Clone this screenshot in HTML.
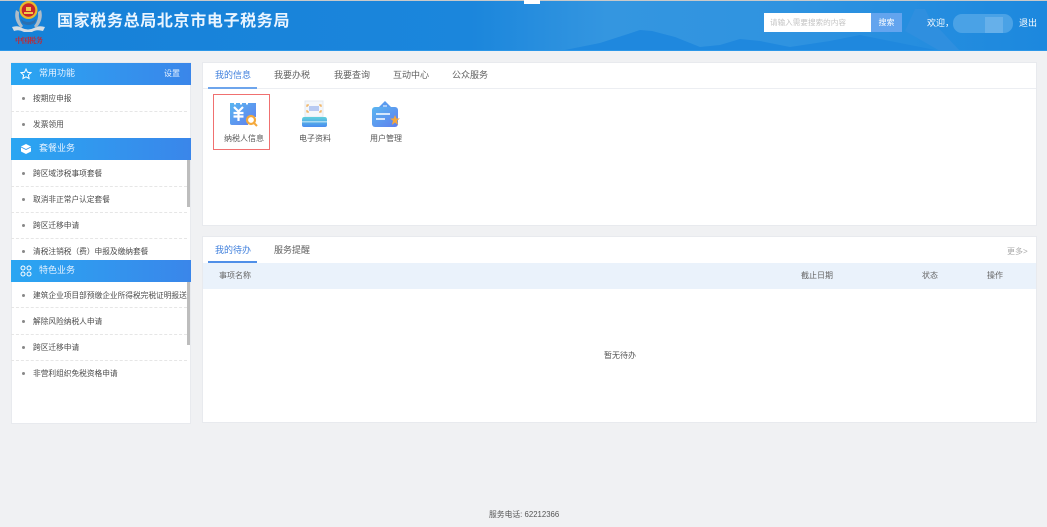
<!DOCTYPE html>
<html lang="zh"><head><meta charset="utf-8"><style>
html,body{margin:0;padding:0}
body{width:1047px;height:527px;background:#f0f1f3;position:relative;overflow:hidden;font-family:"Liberation Sans","Noto Sans CJK SC",sans-serif;color:#555}
#w{position:absolute;left:0;top:0;width:1047px;height:527px;filter:blur(.3px)}
.a{position:absolute;white-space:nowrap}
.t{font-size:8px;line-height:12px}
.panel{background:#fff;border:1px solid #e8eaee;box-sizing:border-box}
.hd{position:absolute;left:11px;width:180px;height:22px;background:linear-gradient(90deg,#2aa6f2,#3a86ea);color:#e8f3ff;font-size:9px;line-height:21px}
.hd span{position:absolute;left:28px}
.hd svg{position:absolute;left:9px;top:5px}
.li{position:absolute;left:11px;width:176px;font-size:7.7px;line-height:12px;color:#4a4a4a;white-space:nowrap;overflow:hidden}
.li i{position:absolute;left:11px;top:4px;width:3px;height:3px;border-radius:50%;background:#888}
.li b{font-weight:normal;position:absolute;left:22px;top:0}
.dash{position:absolute;left:11px;width:176px;border-top:1px dashed #e6e6e6}
.tab{position:absolute;font-size:9px;line-height:12px;color:#5f5f5f;white-space:nowrap}
</style></head><body><div id="w">
<div class="a" style="left:0;top:0;width:1047px;height:1px;background:#c9c9c9"></div>
<div class="a" style="left:0;top:1px;width:1047px;height:50px;background:linear-gradient(90deg,#1681d8 0%,#1b86dc 45%,#3496e0 58%,#2f93e0 75%,#1c88de 100%);overflow:hidden">
<svg width="1047" height="50" style="position:absolute;left:0;top:0"><path d="M560 50L600 42L628 33L640 29L652 30L675 36L700 46L720 44L740 38L760 40L790 46L830 40L860 34L900 42L940 50Z" fill="#1f88de"/><path d="M905 30L915 8L925 8L930 18L960 50L940 50Z" fill="#2f8fdf"/></svg>
</div>
<div class="a" style="left:0;top:50px;width:1047px;height:1px;background:#2b97e8"></div>
<div class="a" style="left:524px;top:0;width:16px;height:4px;background:#fff"></div>
<svg class="a" style="left:10px;top:0" width="38" height="46" viewBox="0 0 38 46">
<path d="M2 27Q8 25 12 28Q18 31 24 28Q29 25 35 27L33 31Q26 29 22 32H14Q9 29 4 31Z" fill="#d5dde3"/>
<path d="M6 10Q3 20 11 28L13 26Q8 20 9 12Z" fill="#aebcc8"/><path d="M31 10Q34 20 26 28L24 26Q29 20 28 12Z" fill="#aebcc8"/>
<circle cx="18.5" cy="10" r="9" fill="#e8b92e"/><circle cx="18.5" cy="10" r="6.8" fill="#c9242a"/><path d="M14 14H23V12H14ZM16 11H21V7H16Z" fill="#f0c84a"/>
<path d="M11 19Q18 25 26 19L25 23Q18 27 12 23Z" fill="#2a6fb0"/>
<text x="5" y="43" font-size="7.5" fill="#c9242a" font-family="Liberation Serif,Noto Serif CJK SC,serif" font-weight="bold" textLength="28">中国税务</text></svg>
<div class="a" style="left:57px;top:12px;font-size:16px;line-height:20px;color:#eaf5ff;font-weight:bold;letter-spacing:.65px">国家税务总局北京市电子税务局</div>
<div class="a" style="left:764px;top:13px;width:107px;height:19px;background:#fff"></div>
<div class="a t" style="left:770px;top:17px;color:#c4c4c4;font-size:7.6px">请输入需要搜索的内容</div>
<div class="a" style="left:871px;top:13px;width:31px;height:19px;background:#63a4ee;color:#fff;font-size:8px;line-height:19px;text-align:center">搜索</div>
<div class="a" style="left:927px;top:17px;font-size:9px;line-height:12px;color:#fff">欢迎，</div>
<div class="a" style="left:953px;top:14px;width:60px;height:19px;background:#4aa2e6;border-radius:9px"></div>
<div class="a" style="left:985px;top:17px;width:18px;height:16px;background:#66b0ea"></div>
<div class="a" style="left:1019px;top:17px;font-size:9px;line-height:12px;color:#fff">退出</div>

<div class="a panel" style="left:11px;top:62px;width:180px;height:362px;border-color:#e8eaee"></div>
<div class="hd" style="top:63px"><svg width="12" height="12" viewBox="0 0 12 12"><path d="M6 1L7.5 4.3L11 4.7L8.4 7L9.1 10.5L6 8.8L2.9 10.5L3.6 7L1 4.7L4.5 4.3Z" fill="none" stroke="#fff"/></svg><span>常用功能</span><span style="left:153px;font-size:8px">设置</span></div>
<div class="li" style="top:93px;height:12px"><i></i><b>按期应申报</b></div>
<div class="dash" style="top:111px"></div>
<div class="li" style="top:119px;height:12px"><i></i><b>发票领用</b></div>
<div class="hd" style="top:138px"><svg width="12" height="12" viewBox="0 0 12 12"><path d="M6 1L11 3.5V8.5L6 11L1 8.5V3.5Z" fill="#fff"/><path d="M1 4L6 6.5L11 4" fill="none" stroke="#2f97ee" stroke-width=".8"/></svg><span>套餐业务</span></div>
<div class="li" style="top:168px;height:12px"><i></i><b>跨区域涉税事项套餐</b></div>
<div class="dash" style="top:186px"></div>
<div class="li" style="top:194px;height:12px"><i></i><b>取消非正常户认定套餐</b></div>
<div class="dash" style="top:212px"></div>
<div class="li" style="top:220px;height:12px"><i></i><b>跨区迁移申请</b></div>
<div class="dash" style="top:238px"></div>
<div class="li" style="top:246px;height:12px"><i></i><b>清税注销税（费）申报及缴纳套餐</b></div>
<div class="a" style="left:187px;top:160px;width:3px;height:47px;background:#bdbdbd"></div>
<div class="hd" style="top:260px;height:22px"><svg width="12" height="12" viewBox="0 0 12 12" fill="none" stroke="#fff"><circle cx="3" cy="3" r="2"/><circle cx="9" cy="3" r="2"/><circle cx="3" cy="9" r="2"/><circle cx="9" cy="9" r="2"/></svg><span>特色业务</span></div>
<div class="li" style="top:290px;height:12px"><i></i><b>建筑企业项目部预缴企业所得税完税证明报送</b></div>
<div class="dash" style="top:307px"></div>
<div class="li" style="top:316px;height:12px"><i></i><b>解除风险纳税人申请</b></div>
<div class="dash" style="top:334px"></div>
<div class="li" style="top:342px;height:12px"><i></i><b>跨区迁移申请</b></div>
<div class="dash" style="top:360px"></div>
<div class="li" style="top:368px;height:12px"><i></i><b>非营利组织免税资格申请</b></div>
<div class="a" style="left:187px;top:282px;width:3px;height:63px;background:#bdbdbd"></div>

<div class="a panel" style="left:202px;top:62px;width:835px;height:164px"></div>
<div class="a" style="left:203px;top:88px;width:833px;height:1px;background:#eceef2"></div>
<div class="a" style="left:208px;top:87px;width:49px;height:2px;background:#6ea5ec"></div>
<div class="tab" style="left:215px;top:69px;color:#3f7fdc">我的信息</div>
<div class="tab" style="left:274px;top:69px">我要办税</div>
<div class="tab" style="left:334px;top:69px">我要查询</div>
<div class="tab" style="left:393px;top:69px">互动中心</div>
<div class="tab" style="left:452px;top:69px">公众服务</div>
<div class="a" style="left:213px;top:94px;width:57px;height:56px;border:1px solid #f07070;box-sizing:border-box"></div>
<svg class="a" style="left:228px;top:101px" width="30" height="26" viewBox="0 0 30 26">
<defs><linearGradient id="g1" x1="0" y1="0" x2="1" y2="1"><stop offset="0" stop-color="#5ab6f0"/><stop offset="1" stop-color="#5f7eee"/></linearGradient><linearGradient id="g2" x1="0" y1="0" x2="0" y2="1"><stop offset="0" stop-color="#5fd0dc"/><stop offset="1" stop-color="#4a8cf0"/></linearGradient></defs>
<path d="M2 2H6V3.5H8V2H12V3.5H14V2H18V3.5H20V2H28V16H20V24H4Q2 24 2 22Z" fill="url(#g1)"/>
<path d="M6 6L10.5 10.5L15 6M5.5 12H15.5M5.5 15.5H15.5M10.5 10.5V20" stroke="#fff" stroke-width="2.2" fill="none"/>
<circle cx="23" cy="19" r="4" fill="#fff" stroke="#f4a93c" stroke-width="2.2"/><path d="M26 22L29 25" stroke="#f4a93c" stroke-width="2"/></svg>
<div class="a t" style="left:224px;top:133px;color:#555">纳税人信息</div>
<svg class="a" style="left:300px;top:100px" width="29" height="30" viewBox="0 0 29 30">
<rect x="5" y="1" width="18" height="16" fill="#f4f7fb" stroke="#e4e9f0"/>
<path d="M9 5H7V7M19 5H21V7M9 12H7V10M19 12H21V10" stroke="#f1a13a" fill="none"/>
<path d="M10 6V11M12 6V11M14 6V11M16 6V11M18 6V11" stroke="#7d9ce8"/>
<path d="M4 17H25Q27 17 27 20V25Q27 27 25 27H4Q2 27 2 25V20Q2 17 4 17Z" fill="url(#g2)"/><rect x="2" y="21" width="25" height="1.5" fill="#dff3fa" opacity=".6"/></svg>
<div class="a t" style="left:299px;top:133px;color:#555">电子资料</div>
<svg class="a" style="left:371px;top:100px" width="30" height="28" viewBox="0 0 30 28">
<path d="M7 8L14 1L21 8Z" fill="#5a9bef"/><path d="M12 6H16" stroke="#fff"/>
<rect x="1" y="7" width="26" height="20" rx="3" fill="url(#g1)"/>
<path d="M5 14H19M5 19H14" stroke="#fff" stroke-width="1.6"/>
<path d="M24 15L25.5 18.5H29L26 20.8L27.2 25L24 22.5L20.8 25L22 20.8L19 18.5H22.5Z" fill="#f5a63a"/></svg>
<div class="a t" style="left:370px;top:133px;color:#555">用户管理</div>

<div class="a panel" style="left:202px;top:236px;width:835px;height:187px"></div>
<div class="a" style="left:208px;top:261px;width:49px;height:2px;background:#4f8fe8"></div>
<div class="tab" style="left:215px;top:244px;color:#3f7fdc">我的待办</div>
<div class="tab" style="left:274px;top:244px">服务提醒</div>
<div class="a" style="left:1007px;top:246px;font-size:8px;line-height:12px;color:#aaa">更多&gt;</div>
<div class="a" style="left:203px;top:263px;width:833px;height:26px;background:#eaf2fb"></div>
<div class="a t" style="left:219px;top:270px;color:#666">事项名称</div>
<div class="a t" style="left:801px;top:270px;color:#666">截止日期</div>
<div class="a t" style="left:922px;top:270px;color:#666">状态</div>
<div class="a t" style="left:987px;top:270px;color:#666">操作</div>
<div class="a t" style="left:604px;top:350px;color:#555">暂无待办</div>
<div class="a t" style="left:489px;top:509px;color:#555;font-size:7.8px">服务电话: 62212366</div>
</div></body></html>
